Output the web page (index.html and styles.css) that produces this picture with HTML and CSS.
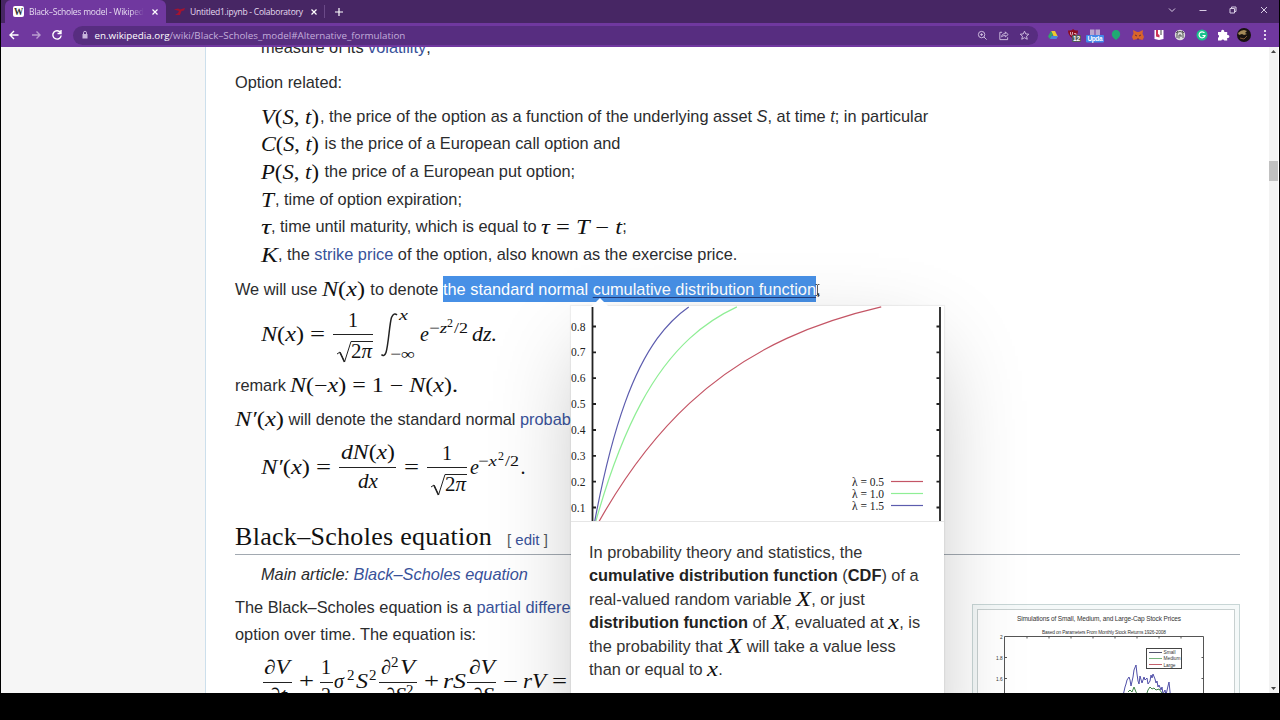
FILE: index.html
```html
<!DOCTYPE html>
<html lang="en">
<head>
    <meta charset="UTF-8">
    <meta name="viewport" content="width=device-width, initial-scale=1.0">
    <title>Black–Scholes model - Wikipedia</title>
    <link rel="stylesheet" href="styles.css">
</head>
<body>

<div class="window">
    <!-- Tab strip -->
    <div class="tabs">
        <div class="tab active">
            <svg class="favicon" viewBox="0 0 11 11"><rect width="11" height="11" rx="2" fill="#fff"/><text x="1" y="8.800" textLength="9" lengthAdjust="spacingAndGlyphs" font-size="9.500" font-weight="bold" font-family="Liberation Serif" fill="#333">W</text></svg>
            <span class="tab-title fade">Black–Scholes model - Wikiped</span>
            <svg class="x" viewBox="0 0 6 6"><path d="M.5 .5l5 5M5.500 .5l-5 5"/></svg>
        </div>
        <div class="tab">
            <svg class="favicon" viewBox="0 0 11 11"><path d="M0 3.500L4 2.500l2 1L11 2l-1 2.500L7.500 5 6 9H1l3-2 1-2z" fill="#a5142f"/></svg>
            <span class="tab-title">Untitled1.ipynb - Colaboratory</span>
            <svg class="x" viewBox="0 0 6 6"><path d="M.5 .5l5 5M5.500 .5l-5 5"/></svg>
        </div>
        <svg class="plus" viewBox="0 0 8 8"><path d="M4 0v8M0 4h8"/></svg>
        <div class="controls">
            <svg viewBox="0 0 8 8"><path d="M1 2.500l3 3 3-3"/></svg>
            <svg viewBox="0 0 8 8"><path d="M.5 4.500h7"/></svg>
            <svg viewBox="0 0 8 8"><path d="M1 2.500h4.500V7H1zM2.500 2.500V1H7v4.500H5.500"/></svg>
            <svg viewBox="0 0 8 8"><path d="M1 1l6 6M7 1l-6 6"/></svg>
        </div>
    </div>

    <!-- Toolbar -->
    <div class="toolbar">
        <svg class="nav" viewBox="0 0 12 12"><path d="M10.500 6H2M6 2L2 6l4 4"/></svg>
        <svg class="nav dim" viewBox="0 0 12 12"><path d="M2 6h8M6.500 2.500L10 6l-3.500 3.500"/></svg>
        <svg class="nav" viewBox="0 0 12 12"><path d="M9.500 3.500A4.200 4.200 0 1 0 10.200 6.500M10 1v3.500H6.500"/></svg>
        <div class="omnibox">
            <svg class="lock" viewBox="0 0 8 10"><rect x="1.500" y="4" width="5" height="4.500" fill="#c9b5dc"/><path d="M2.500 4V2.800a1.500 1.500 0 0 1 3 0V4" fill="none" stroke="#c9b5dc"/></svg>
            <span class="url"><b>en.wikipedia.org</b>/wiki/Black–Scholes_model#Alternative_formulation</span>
            <div class="box-icons">
                <svg viewBox="0 0 12 12"><circle cx="5" cy="5" r="3.500"/><path d="M7.500 7.500l3 3M3.500 5h3M5 3.500v3"/></svg>
                <svg viewBox="0 0 12 12"><path d="M4.500 2.500H2v8h8.500V8M4 7.500c0-2.500 1.500-3.500 4-3.500V2l3 3-3 2.500V6C6 6 5 6.500 4 7.500z"/></svg>
                <svg viewBox="0 0 12 12"><path d="M6 1.300l1.400 3 3.300.3-2.500 2.200.8 3.300L6 8.400 3 10.100l.8-3.300L1.300 4.600l3.300-.3z"/></svg>
            </div>
        </div>
        <div class="extensions">
            <svg viewBox="0 0 14 14"><path d="M5 3h4l3 6H8z" fill="#efc62f"/><path d="M5 3l2 3.500-3 4.500-2-2.500z" fill="#32a56c"/><path d="M4 11l1.500-3H12l-1.500 3z" fill="#4a86dd"/></svg>
            <svg viewBox="0 0 14 14"><path d="M1 2.500Q5 3 6 1q2 2 5 1.500 0 6-5 8-5-3-5-8z" fill="#8c0d22"/><path d="M3.500 4v2.500q1.500 1 2 0V4M7 5.500h2v2" fill="none" stroke="#d9a0b0"/><rect x="5" y="7" width="9" height="7" rx="1" fill="#555b57"/><text x="6" y="13" textLength="7" font-size="6.500" font-weight="bold" fill="#fff">12</text></svg>
            <svg viewBox="0 0 14 14"><path d="M2 1.500h4.500V7H2zM7.500 1.500H12V7H7.500z" fill="#b9a6cf"/><rect x="-2" y="7" width="18" height="7.500" rx="1" fill="#4388ea"/><text x="-.5" y="13.200" textLength="15" font-size="6.500" font-weight="bold" fill="#fff">Upda</text></svg>
            <svg viewBox="0 0 14 14"><path d="M7 2a4 4 0 0 1 4.200 4.200C11.200 9 9 10 7 12 5 10 2.800 9 2.800 6.200A4 4 0 0 1 7 2z" fill="#1faa72"/></svg>
            <svg viewBox="0 0 14 14"><path d="M2 2l4 2h2l4-2-.5 3.500L13 9l-1.500 3L8 11H6l-3.500 1L1 9l1.500-3.500z" fill="#d9642b"/><path d="M4 7l2 1M10 7L8 8M6 11h2" stroke="#6b2e3b"/></svg>
            <svg viewBox="0 0 14 14"><path d="M2.500 2h9v9L7 12l-4.500-1z" fill="#fff"/><path d="M4 2v6.500l3.500 1V7L6 6V2z" fill="#cc3558"/><path d="M9 2v5" stroke="#444"/></svg>
            <svg viewBox="0 0 14 14"><circle cx="7" cy="7" r="5.200" fill="#ddd"/><path d="M4 10V6q0-2.500 3-2.500T10 6v4M6 10.500V7h2v2M3 5l2-2M9 3l2 2" fill="none" stroke="#555"/></svg>
            <svg viewBox="0 0 14 14"><circle cx="7" cy="7" r="5.500" fill="#18c18c"/><path d="M9.500 5A3 3 0 1 0 10 7.500H7.500" fill="none" stroke="#fff" stroke-width="1.200"/></svg>
            <svg viewBox="0 0 14 14"><path d="M2 4h3.200a1.600 1.600 0 1 1 3 0h3v3a1.600 1.600 0 1 1 0 3v2.500H8.300a1.600 1.600 0 0 0-3 0H2V9.700a1.600 1.600 0 0 0 0-3z" fill="#fff"/></svg>
            <svg viewBox="0 0 14 14"><circle cx="7" cy="7" r="7" fill="#17120f"/><path d="M1 5q3-3 6-3l3 1-2 2 2 1-3 1-2-1-3 1z" fill="#a48a58"/><path d="M3 10l4 1 3-3" stroke="#7b5536" fill="none"/></svg>
            <svg viewBox="0 0 14 14" fill="#fff"><circle cx="7" cy="3" r="1.100"/><circle cx="7" cy="7" r="1.100"/><circle cx="7" cy="11" r="1.100"/></svg>
        </div>
    </div>

    <div class="page">
        <div class="sidebar"></div>
        <div class="article">
            <p class="line top">measure of its <a>volatility</a>;</p>
            <p class="line">Option related:</p>
            <dl>
                <dd><svg class="m" width="59"><text y="16.500" textLength="58" lengthAdjust="spacingAndGlyphs">V<tspan class="r">(</tspan>S<tspan class="r">,</tspan> t<tspan class="r">)</tspan></text></svg>, the price of the option as a function of the underlying asset <i>S</i>, at time <i>t</i>; in particular</dd>
                <dd><svg class="m" width="59"><text y="16.500" textLength="58" lengthAdjust="spacingAndGlyphs">C<tspan class="r">(</tspan>S<tspan class="r">,</tspan> t<tspan class="r">)</tspan></text></svg> is the price of a European call option and</dd>
                <dd><svg class="m" width="59"><text y="16.500" textLength="58" lengthAdjust="spacingAndGlyphs">P<tspan class="r">(</tspan>S<tspan class="r">,</tspan> t<tspan class="r">)</tspan></text></svg> the price of a European put option;</dd>
                <dd><svg class="m" width="14"><text y="16.500" textLength="13" lengthAdjust="spacingAndGlyphs">T</text></svg>, time of option expiration;</dd>
                <dd><svg class="m" width="10"><text y="16.500" textLength="10" lengthAdjust="spacingAndGlyphs">τ</text></svg>, time until maturity, which is equal to <svg class="m" width="81"><text y="16.500" textLength="81" lengthAdjust="spacingAndGlyphs">τ <tspan class="r">=</tspan> T <tspan class="r">−</tspan> t</text></svg>;</dd>
                <dd><svg class="m" width="17"><text y="16.500" textLength="17" lengthAdjust="spacingAndGlyphs">K</text></svg>, the <a>strike price</a> of the option, also known as the exercise price.</dd>
            </dl>
            <p class="line">We will use <svg class="m" width="44"><text y="16" textLength="43" lengthAdjust="spacingAndGlyphs">N<tspan class="r">(</tspan>x<tspan class="r">)</tspan></text></svg> to denote <span class="selected">the standard normal <u>cumulative distribution function</u></span>,</p>

            <svg class="formula" width="260" height="68">
                <text x="0" y="38" textLength="43" lengthAdjust="spacingAndGlyphs">N<tspan class="r">(</tspan>x<tspan class="r">)</tspan></text>
                <text class="r" x="49" y="38" textLength="15" lengthAdjust="spacingAndGlyphs">=</text>
                <text class="r" x="87" y="24">1</text>
                <path d="M72 31.500h40M76 51l3-2 4.500 10L90 38.500h22"/>
                <path class="thick" d="M79 49.500l4.500 9.500"/>
                <text class="r" x="90" y="55" textLength="21" lengthAdjust="spacingAndGlyphs">2<tspan class="i">π</tspan></text>
                <path class="int" d="M136 12q-3-3-5.500 2.500c-2 6-3 27-5.500 35-1 3-3 4-4.500 2"/>
                <text class="s" x="138" y="17" textLength="9" lengthAdjust="spacingAndGlyphs">x</text>
                <text class="s r" x="129" y="56" textLength="25" lengthAdjust="spacingAndGlyphs">−∞</text>
                <text x="159" y="38">e</text>
                <text class="s" x="168" y="30" textLength="18" lengthAdjust="spacingAndGlyphs"><tspan class="r">−</tspan>z</text>
                <text class="ss r" x="186" y="24">2</text>
                <text class="s r" x="193" y="30" textLength="14" lengthAdjust="spacingAndGlyphs">/2</text>
                <text x="211" y="38" textLength="25" lengthAdjust="spacingAndGlyphs">dz.</text>
            </svg>

            <p class="line remark">remark <svg class="m" width="168"><text y="16" textLength="168" lengthAdjust="spacingAndGlyphs">N<tspan class="r">(−</tspan>x<tspan class="r">) = 1 − </tspan>N<tspan class="r">(</tspan>x<tspan class="r">).</tspan></text></svg></p>
            <p class="line"><svg class="m" width="49"><text y="16" textLength="49" lengthAdjust="spacingAndGlyphs">N′<tspan class="r">(</tspan>x<tspan class="r">)</tspan></text></svg> will denote the standard normal <a>probab</a></p>

            <svg class="formula" width="280" height="68">
                <text x="0" y="41" textLength="49" lengthAdjust="spacingAndGlyphs">N′<tspan class="r">(</tspan>x<tspan class="r">)</tspan></text>
                <text class="r" x="55" y="41" textLength="15" lengthAdjust="spacingAndGlyphs">=</text>
                <text x="80" y="26" textLength="54" lengthAdjust="spacingAndGlyphs">dN<tspan class="r">(</tspan>x<tspan class="r">)</tspan></text>
                <text x="97" y="55" textLength="20" lengthAdjust="spacingAndGlyphs">dx</text>
                <text class="r" x="143" y="41" textLength="15" lengthAdjust="spacingAndGlyphs">=</text>
                <text class="r" x="181" y="27">1</text>
                <path d="M78 34.500h57M166 34.500h40M170 54l3-2 4.500 10L184 41.500h22"/>
                <path class="thick" d="M173 52.500l4.500 9.500"/>
                <text class="r" x="184" y="58" textLength="21" lengthAdjust="spacingAndGlyphs">2<tspan class="i">π</tspan></text>
                <text x="209" y="41">e</text>
                <text class="s" x="217" y="33" textLength="19" lengthAdjust="spacingAndGlyphs"><tspan class="r">−</tspan>x</text>
                <text class="ss r" x="237" y="27">2</text>
                <text class="s r" x="244" y="33" textLength="14" lengthAdjust="spacingAndGlyphs">/2</text>
                <text x="260" y="41">.</text>
            </svg>

            <h2>Black–Scholes equation <span class="edit">[ <a>edit</a> ]</span></h2>
            <div class="below">
                <div class="prose">
                    <p class="hatnote">Main article: <a>Black–Scholes equation</a></p>
                    <p class="para">The Black–Scholes equation is a <a>partial differe</a><br>option over time. The equation is:</p>
                    <svg class="formula eq" width="320" height="60">
                        <text x="3" y="26" textLength="26" lengthAdjust="spacingAndGlyphs">∂V</text>
                        <text x="7" y="54" textLength="19" lengthAdjust="spacingAndGlyphs">∂t</text>
                        <text class="r" x="38" y="40" textLength="15" lengthAdjust="spacingAndGlyphs">+</text>
                        <text class="r" x="60" y="26">1</text>
                        <text class="r" x="60" y="54">2</text>
                        <text x="73" y="40">σ</text>
                        <text class="s r" x="86" y="32">2</text>
                        <text x="95" y="40" textLength="12" lengthAdjust="spacingAndGlyphs">S</text>
                        <text class="s r" x="108" y="32">2</text>
                        <text x="120" y="26">∂</text>
                        <text class="s r" x="130" y="19">2</text>
                        <text x="139" y="26" textLength="15" lengthAdjust="spacingAndGlyphs">V</text>
                        <text x="123" y="54" textLength="22" lengthAdjust="spacingAndGlyphs">∂S</text>
                        <text class="s r" x="145" y="47">2</text>
                        <text class="r" x="163" y="40" textLength="15" lengthAdjust="spacingAndGlyphs">+</text>
                        <text x="182" y="40" textLength="23" lengthAdjust="spacingAndGlyphs">rS</text>
                        <text x="208" y="26" textLength="26" lengthAdjust="spacingAndGlyphs">∂V</text>
                        <text x="210" y="54" textLength="23" lengthAdjust="spacingAndGlyphs">∂S</text>
                        <text class="r" x="242" y="40" textLength="15" lengthAdjust="spacingAndGlyphs">−</text>
                        <text x="262" y="40" textLength="23" lengthAdjust="spacingAndGlyphs">rV</text>
                        <text class="r" x="291" y="40" textLength="15" lengthAdjust="spacingAndGlyphs">=</text>
                        <path d="M2 34.500h29M59 34.500h13M118 34.500h38M206 34.500h29"/>
                    </svg>
                </div>
                <div class="thumb">
                    <svg class="stock" width="257" height="120">
                        <text x="39" y="11" textLength="164" font-size="6.500">Simulations of Small, Medium, and Large-Cap Stock Prices</text>
                        <text x="64" y="23.500" textLength="124" font-size="4.800">Based on Parameters From Monthly Stock Returns 1926-2008</text>
                        <path d="M26.500 120V26.500h199V120M49 26v2.500M71 26v2.500M93 26v2.500M115 26v2.500M137 26v2.500M159 26v2.500M181 26v2.500M203 26v2.500M27 47.500h2M27 68.500h2M223.500 47.500h2M223.500 68.500h2" fill="none" stroke="#555"/>
                        <text x="22" y="29" font-size="4.800">2</text>
                        <text x="18" y="49.500" font-size="4.800">1.8</text>
                        <text x="18" y="70.500" font-size="4.800">1.6</text>
                        <path d="M145 86l2-9 1-3 1-4 2-3 1 3 1 6 2-9 1-7 2-5 1 9 1 7 1 3 1-8 2 7 2-6 1 3 2-2 1 6 2-3 1-6 1 3 1-4 2 5 1 4 1-2 1 6 1-2 2 5 1-3 1 7 2-4 1 5 2-9 1-4 2 19" fill="none" stroke="#504fa8"/>
                        <path d="M150 82l2-2 2 2 2-5 2 5 2 4h8l2-6 2-3 2 2 2-1 2 2 3-1 3 4" fill="none" stroke="#408348"/>
                        <rect x="168.500" y="38.500" width="35" height="20" fill="#fff" stroke="#444"/>
                        <path d="M171 42.500h13" stroke="#55556e"/><path d="M171 48.500h13" stroke="#76b37c"/><path d="M171 54.500h13" stroke="#c4616d"/>
                        <text x="185.500" y="44.200" textLength="12" font-size="4.800">Small</text>
                        <text x="185.500" y="50.300" textLength="17" font-size="4.800">Medium</text>
                        <text x="185.500" y="56.500" textLength="12" font-size="4.800">Large</text>
                    </svg>
                </div>
            </div>
        </div>
        <div class="scrollbar">
            <svg viewBox="0 0 9 9"><path d="M2 6l2.500-3L7 6z"/></svg>
            <div class="handle"></div>
            <svg viewBox="0 0 9 9"><path d="M2 3l2.500 3L7 3z"/></svg>
        </div>

        <!-- Page preview card -->
        <div class="preview">
            <svg class="cdf" width="373" height="216">
                <g fill="none" stroke-width="1.200">
                    <path stroke="#c45565" d="M21.500 227.400C53.900 167 86.300 127.100 118.700 97.100S183.400 47.300 215.800 32.400S278.700 8.200 310.200 .9"/>
                    <path stroke="#8fee95" d="M21.500 227.400C37.700 167 53.900 127.100 70.100 97.100S102.500 47.300 118.700 32.400S150.100 8.200 165.900 .9"/>
                    <path stroke="#5c5cae" d="M21.500 227.400C32.300 167 43.100 127.100 53.900 97.100S75.500 47.300 86.300 32.400S107.300 8.200 117.700 .9"/>
                    <path stroke="#c45565" d="M320 175.500h32"/>
                    <path stroke="#8fee95" d="M320 187.500h32"/>
                    <path stroke="#5c5cae" d="M320 199.500h32"/>
                    <path class="axis" d="M21.500 1v215M369 1v215"/>
                    <path class="axis" d="M21.500 20.500h3.500M21.500 46.400h3.500M21.500 72.200h3.500M21.500 98h3.500M21.500 124h3.500M21.500 149.800h3.500M21.500 175.700h3.500M21.500 201.500h3.500M365.500 20.500h3.500M365.500 46.400h3.500M365.500 72.200h3.500M365.500 98h3.500M365.500 124h3.500M365.500 149.800h3.500M365.500 175.700h3.500M365.500 201.500h3.500"/>
                </g>
                <text x="0" y="24.500">0.8</text>
                <text x="0" y="50.400">0.7</text>
                <text x="0" y="76.200">0.6</text>
                <text x="0" y="102">0.5</text>
                <text x="0" y="128">0.4</text>
                <text x="0" y="153.800">0.3</text>
                <text x="0" y="179.700">0.2</text>
                <text x="0" y="205.500">0.1</text>
                <text x="281" y="180" textLength="32">λ = 0.5</text>
                <text x="281" y="192" textLength="32">λ = 1.0</text>
                <text x="281" y="203.500" textLength="32">λ = 1.5</text>
            </svg>
            <p>In probability theory and statistics, the<br>
            <b>cumulative distribution function</b> (<b>CDF</b>) of a<br>
            real-valued random variable <svg class="m" width="15"><text y="16" textLength="15" lengthAdjust="spacingAndGlyphs">X</text></svg>, or just<br>
            <b>distribution function</b> of <svg class="m" width="15"><text y="16" textLength="15" lengthAdjust="spacingAndGlyphs">X</text></svg>, evaluated at <svg class="m" width="11"><text y="16" textLength="11" lengthAdjust="spacingAndGlyphs">x</text></svg>, is<br>
            the probability that <svg class="m" width="15"><text y="16" textLength="15" lengthAdjust="spacingAndGlyphs">X</text></svg> will take a value less<br>
            than or equal to <svg class="m" width="11"><text y="16" textLength="11" lengthAdjust="spacingAndGlyphs">x</text></svg>.</p>
        </div>

        <!-- Mouse pointer (text beam) -->
        <svg class="beam" viewBox="0 0 5 12"><path d="M.5 .5h1.500l.5.500.5-.500h1.500M2.500 1v10M.5 11.500h1.500l.5-.500.5.500h1.500"/></svg>
    </div>
</div>

</body>
</html>
```
FILE: styles.css
```css
* {
    box-sizing: border-box;
}
body {
    margin: 0;
    background-color: #000;
    height: 720px;
    overflow: hidden;
    font-family: "Liberation Sans", Arial, sans-serif;
}
svg {
    flex: none;
}
.window {
    height: 693px;
    margin: 0 1px;
    display: flex;
    flex-direction: column;
    overflow: hidden;
}

/* Browser chrome */
.tabs {
    height: 23px;
    flex: none;
    display: flex;
    align-items: center;
    padding-left: 4px;
    background-color: #472664;
    font-family: "Open Sans", "Noto Sans", sans-serif;
    font-size: 8.5px;
    letter-spacing: -.23px;
    color: #e6dcf0;
}
.tab {
    display: flex;
    align-items: center;
    height: 23px;
    width: 159px;
    padding: 0 7px 0 8px;
    border-right: 1px solid #6b4a88;
    border-image: linear-gradient(transparent 25%, #6b4a88 25%, #6b4a88 75%, transparent 75%) 1;
}
.tab.active {
    width: 161px;
    padding: 0 8px;
    background-color: #70389f;
    border: none;
    border-radius: 6px 6px 0 0;
}
.favicon {
    width: 11px;
    height: 11px;
    margin-right: 5px;
}
.tab-title {
    white-space: nowrap;
}
.fade {
    -webkit-mask-image: linear-gradient(to right, #000 88%, transparent);
    mask-image: linear-gradient(to right, #000 88%, transparent);
}
.x {
    width: 6px;
    height: 6px;
    margin-left: auto;
}
.plus {
    width: 8px;
    height: 8px;
    margin-left: 10px;
}
.x path,
.plus path {
    stroke: #fff;
    stroke-width: 1.2;
}
.controls {
    margin-left: auto;
    display: flex;
    margin-bottom: 4px;
}
.controls svg {
    width: 8px;
    height: 8px;
    margin: 0 11.25px;
}
.controls path {
    fill: none;
    stroke: #d8cce4;
}
.toolbar {
    height: 24px;
    flex: none;
    display: flex;
    align-items: center;
    padding-left: 7px;
    background-color: #70389f;
}
.nav {
    width: 12px;
    height: 12px;
    margin-right: 9.5px;
}
.nav path {
    fill: none;
    stroke: #fff;
    stroke-width: 1.4;
}
.dim {
    opacity: .5;
}
.omnibox {
    width: 965px;
    height: 19px;
    border-radius: 10px;
    background-color: #572d80;
    display: flex;
    align-items: center;
    padding: 0 2px 0 8px;
    font-family: "Open Sans", "Noto Sans", sans-serif;
    font-size: 9.8px;
    color: #c3addb;
}
.lock {
    width: 8px;
    height: 10px;
    margin-right: 6px;
}
.url {
    white-space: nowrap;
}
.url b {
    font-weight: normal;
    color: #fff;
}
.box-icons {
    margin-left: auto;
    display: flex;
}
.box-icons svg {
    width: 11px;
    height: 11px;
    margin: 0 5.1px;
    fill: none;
    stroke: #d4c4e4;
}
.extensions {
    margin-left: auto;
    display: flex;
    padding-right: 3px;
}
.extensions svg {
    width: 14px;
    height: 14px;
    margin: 0 3.65px;
    overflow: visible;
}

/* Article */
.page {
    position: relative;
    flex: 1;
    min-height: 0;
    display: flex;
    background-color: #fff;
    overflow: hidden;
}
.sidebar {
    width: 205px;
    flex: none;
    background-color: #f6f6f6;
    border-right: 1px solid #ccdfec;
}
.article {
    width: 1063px;
    flex: none;
    padding: 0 29px;
    font-size: 16.33px;
    color: #2b2c2e;
    white-space: nowrap;
}
.article p,
.article dl,
.article dd {
    margin: 0;
}
.article a {
    color: #39529a;
}
.line {
    height: 28px;
    line-height: 28px;
}
.article .top {
    margin: -14px 0 6.5px 26px;
}
.article dl {
    padding: 7px 0 6px 26px;
}
.article dd {
    height: 27.7px;
    line-height: 27.7px;
}
.article .remark {
    margin-bottom: 6px;
}
.selected {
    display: inline-block;
    height: 26px;
    line-height: 26px;
    background-color: #4790e6;
    color: #fff;
}
.selected u {
    text-decoration-color: #223c7c;
    text-underline-offset: 2px;
}
.beam {
    position: absolute;
    left: 814px;
    top: 237px;
    width: 5px;
    height: 12px;
    fill: none;
    stroke: #333;
    stroke-width: .8;
}

/* Math */
.m {
    height: 20px;
    vertical-align: -5px;
    overflow: visible;
}
.m text,
.formula text {
    font-family: "Liberation Serif", serif;
    font-style: italic;
    font-size: 20px;
    fill: #111;
}
.m .r,
.formula .r {
    font-style: normal;
}
.formula .i {
    font-style: italic;
}
.formula .s {
    font-size: 15px;
}
.formula .ss {
    font-size: 12px;
}
.formula {
    display: block;
    margin-left: 26px;
}
.formula path {
    fill: none;
    stroke: #222;
}
.formula .int {
    stroke-width: 1.5;
}
.formula .thick {
    stroke-width: 1.6;
}

h2 {
    margin: 16px 0 0;
    height: 38px;
    line-height: 40px;
    border-bottom: 1px solid #a2a9b1;
    font-family: "Liberation Serif", Georgia, serif;
    font-weight: normal;
    font-size: 26px;
    letter-spacing: .3px;
    color: #111;
}
.edit {
    margin-left: 8px;
    font-family: "Liberation Sans", Arial, sans-serif;
    font-size: 15px;
    letter-spacing: 0;
    color: #54595d;
}
.below {
    display: flex;
    justify-content: space-between;
}
.hatnote {
    padding: 5px 0 6px 26px;
    line-height: 28px;
    font-style: italic;
}
.para {
    line-height: 27px;
}
.thumb {
    width: 268px;
    height: 200px;
    margin-top: 49px;
    padding: 4px;
    border: 1px solid #c8d6d6;
    background-color: #f5f9f9;
}
.stock {
    display: block;
    width: 258px;
    height: 190px;
    border: 1px solid #c8d0d0;
    background-color: #fff;
}
.stock text {
    fill: #333;
}

.scrollbar {
    width: 9px;
    flex: none;
    display: flex;
    flex-direction: column;
    background-color: #f3f3f3;
}
.scrollbar svg {
    width: 9px;
    height: 9px;
    fill: #444;
}
.handle {
    height: 20px;
    margin: 105px 0 auto;
    background-color: #c1c1c1;
}

/* Link preview, floats over the article */
.preview {
    position: absolute;
    left: 570px;
    top: 259px;
    width: 373px;
    height: 470px;
    background-color: #fff;
    box-shadow: 0 30px 90px -20px rgba(0, 0, 0, .3), 0 0 1px 1px rgba(0, 0, 0, .05);
}
.preview:before {
    content: "";
    position: absolute;
    left: 21px;
    top: -8px;
    border: 8px solid transparent;
    border-top: none;
    border-bottom-color: #fff;
}
.cdf {
    display: block;
    border-bottom: 1px solid #e6e6e6;
}
.cdf .axis {
    stroke: #222;
    stroke-width: 1.8;
}
.cdf text {
    font-family: "Liberation Serif", serif;
    font-size: 11.5px;
    fill: #222;
}
.preview p {
    margin: 19px 0 0 18px;
    font-size: 16.35px;
    line-height: 23.4px;
    color: #333;
    white-space: nowrap;
}
.preview b {
    color: #222;
}
```
